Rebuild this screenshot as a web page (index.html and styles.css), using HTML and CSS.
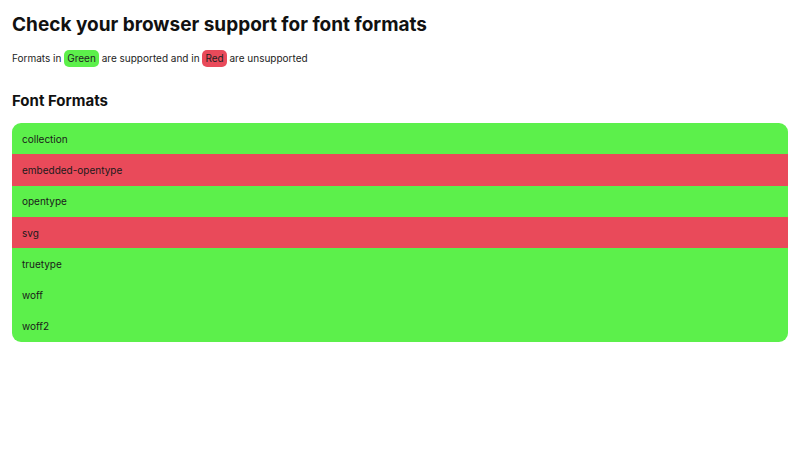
FILE: index.html
```html
<!DOCTYPE html>
<html>
<head>
<meta charset="utf-8">
<link rel="stylesheet" href="styles.css">
</head>
<body>
<h1 class="title">Check your browser support for font formats</h1>
<p class="intro">Formats in <span class="badge ok">Green</span> are supported and in <span class="badge bad">Red</span> are unsupported</p>
<h2 class="subtitle">Font Formats</h2>
<ul class="formats">
  <li class="row ok">collection</li>
  <li class="row bad">embedded-opentype</li>
  <li class="row ok">opentype</li>
  <li class="row bad">svg</li>
  <li class="row ok">truetype</li>
  <li class="row ok">woff</li>
  <li class="row ok">woff2</li>
</ul>
</body>
</html>
```
FILE: styles.css
```css
html, body {
  background: #ffffff;
}
body {
  margin: 0;
  padding: 12px 12px;
  font-family: Inter, "Noto Sans", sans-serif;
  color: #111;
}
.title {
  font-size: 19px;
  font-weight: 700;
  line-height: 26px;
  margin: 0;
}
.intro {
  font-size: 10px;
  line-height: 18px;
  margin: 11px 0 0;
  color: #222;
}
.badge {
  display: inline-block;
  padding: 0 3px;
  border-radius: 5px;
  line-height: 17px;
}
.badge.ok { background: #5cf04b; }
.badge.bad { background: #e94a5a; }
.subtitle {
  font-size: 15px;
  font-weight: 700;
  line-height: 20px;
  margin: 24px 0 0;
}
.formats {
  list-style: none;
  margin: 12px 0 0;
  padding: 0;
  border-radius: 9px;
  overflow: hidden;
}
.row {
  height: 31.3px;
  display: flex;
  align-items: center;
  padding-left: 10px;
  font-size: 10px;
  color: #1a1a1a;
}
.row.ok { background: #5cf04b; }
.row.bad { background: #e94a5a; }
```
